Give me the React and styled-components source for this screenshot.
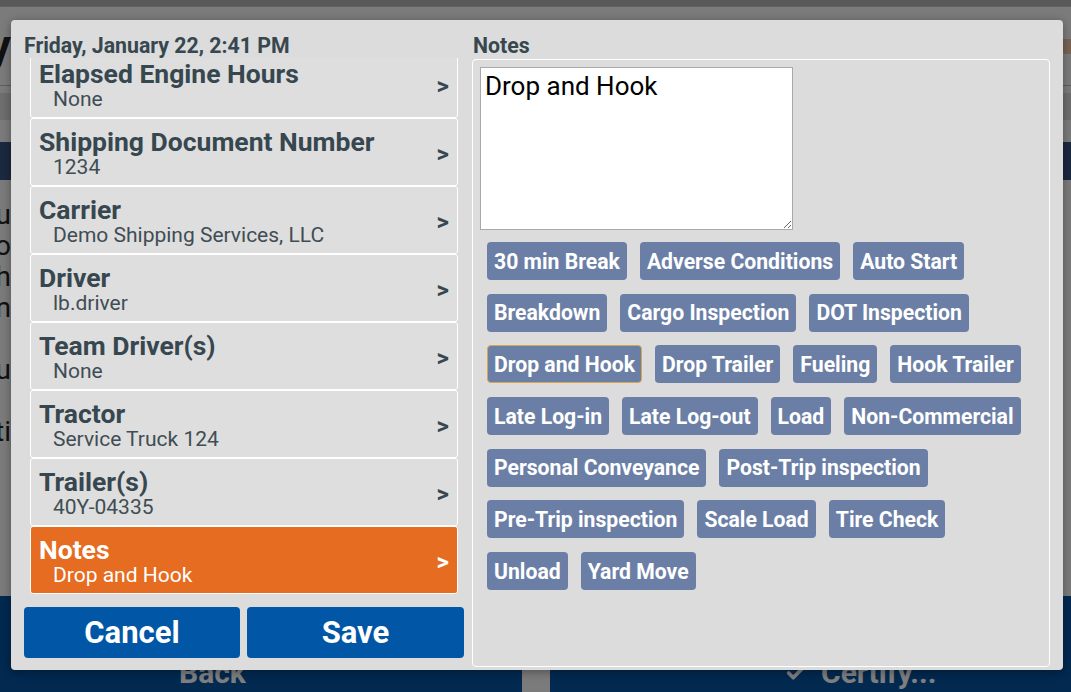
import React, { useLayoutEffect, useRef } from 'react'
import styled, { createGlobalStyle } from 'styled-components'
import { Check } from 'lucide-react'

const GlobalStyle = createGlobalStyle`
  html, body {
    margin: 0;
    padding: 0;
  }
  body {
    font-family: Roboto, "Noto Sans", sans-serif;
    background: #f6f6f6;
    overflow: hidden;
  }
`

const Page = styled.div`
  position: relative;
  width: 1071px;
  height: 692px;
  overflow: hidden;
  display: flex;
  flex-direction: column;
  background: #f6f6f6;
`

const TopStrip = styled.div`
  height: 6px;
  background: #b2b2b2;
  border-bottom: 1px solid #c4c4c4;
`

const BgRow = styled.div`
  display: flex;
  justify-content: space-between;
  align-items: ${p => p.align || 'center'};
  height: ${p => p.h}px;
  background: ${p => p.bg || 'transparent'};
  border-bottom: ${p => (p.line ? '1px solid #bcbcbc' : 'none')};
  margin-top: ${p => p.mt || 0}px;
`

const Edge = styled.div`
  width: ${p => p.w}px;
  overflow: hidden;
  display: flex;
  justify-content: ${p => (p.right ? 'flex-start' : 'flex-end')};
  white-space: nowrap;
  color: #222;
  font-size: ${p => p.size || 28}px;
  font-weight: ${p => p.weight || 400};
  line-height: 1;
`

const OrangeChip = styled.div`
  width: 110px;
  height: 37px;
  margin-top: -22px;
  background: #f0c4a6;
  border-radius: 3px;
  flex-shrink: 0;
`

const Lines = styled.div`
  display: flex;
  flex-direction: column;
  margin-top: 18px;
`

const Footer = styled.div`
  margin-top: auto;
  height: 96px;
  display: flex;
  gap: 28px;
`

const FootButton = styled.div`
  box-sizing: border-box;
  flex: ${p => p.flex};
  background: #0452a0;
  color: #fff;
  font-size: 30px;
  font-weight: 700;
  display: flex;
  align-items: flex-end;
  justify-content: flex-start;
  gap: 14px;
  padding: 0 0 4px ${p => p.pl || 0}px;
  line-height: 1;
  svg {
    margin-bottom: 4px;
  }
`

const Overlay = styled.div`
  position: absolute;
  inset: 0;
  background: rgba(0, 0, 0, 0.5);
`

const Modal = styled.div`
  position: absolute;
  left: 11px;
  top: 20px;
  width: 1052px;
  height: 650px;
  box-sizing: border-box;
  padding: 14px 13px 3px 13px;
  background: #dcdcdc;
  border-radius: 4px;
  box-shadow: 0 2px 10px rgba(0, 0, 0, 0.35);
  display: grid;
  grid-template-columns: 440px 1fr;
  column-gap: 8px;
  color: #37474f;
`

const Column = styled.div`
  display: flex;
  flex-direction: column;
  min-height: 0;
`

const Heading = styled.div`
  font-size: 21.3px;
  font-weight: 700;
  line-height: 24px;
  padding-left: ${p => p.pl || 0}px;
  color: #37474f;
`

const List = styled.div`
  margin: 0 6px;
  height: 536px;
  overflow-y: auto;
  scrollbar-width: none;
  &::-webkit-scrollbar {
    display: none;
  }
`

const Item = styled.div`
  box-sizing: border-box;
  height: 68px;
  display: flex;
  align-items: flex-start;
  justify-content: space-between;
  padding: 10px 8px 7px 8px;
  border: 1px solid #fff;
  border-radius: 3px;
  background: ${p => (p.active ? '#e66c21' : '#dedede')};
  color: ${p => (p.active ? '#fff' : '#37474f')};
`

const ItemText = styled.div`
  display: flex;
  flex-direction: column;
`

const ItemTitle = styled.div`
  font-size: 26.5px;
  font-weight: 700;
  line-height: 26px;
`

const ItemValue = styled.div`
  font-size: 21px;
  line-height: 22px;
  margin-top: 1px;
  padding-left: 14px;
  color: ${p => (p.active ? '#fff' : '#3f4d54')};
`

const Arrow = styled.span`
  align-self: center;
  font-size: 24px;
  font-weight: 700;
`

const Actions = styled.div`
  margin-top: 13px;
  display: grid;
  grid-template-columns: 216px 217px;
  column-gap: 7px;
`

const ActionButton = styled.button`
  height: 51px;
  border: none;
  border-radius: 4px;
  background: #0156a5;
  color: #fff;
  font-family: Roboto, sans-serif;
  font-size: 31px;
  font-weight: 700;
  padding: 0;
`

const Panel = styled.div`
  flex: 1;
  margin-top: 1px;
  padding: 7px;
  border: 1px solid #fff;
  border-radius: 4px;
  display: flex;
  flex-direction: column;
  align-items: flex-start;
`

const NoteBox = styled.textarea`
  width: 313px;
  height: 163px;
  box-sizing: border-box;
  border: 1px solid #a9a9a9;
  background: #fff;
  color: #000;
  font-family: Roboto, sans-serif;
  font-size: 26px;
  line-height: 30px;
  padding: 3px 4px;
  margin: 0;
  outline: none;
`

const Tags = styled.div`
  margin-top: 12px;
  padding: 0 20px 0 7px;
  align-self: stretch;
  display: flex;
  flex-wrap: wrap;
  gap: 13.7px 13px;
`

const Tag = styled.button`
  height: 38px;
  box-sizing: border-box;
  padding: 0 6px;
  border: 1px solid ${p => (p.selected ? '#d8a64c' : 'transparent')};
  border-radius: 4px;
  background: #6b7fa6;
  color: #fff;
  font-family: Roboto, sans-serif;
  font-size: 21.2px;
  font-weight: 700;
  white-space: nowrap;
`

const fields = [
  { title: 'Elapsed Engine Hours', value: 'None' },
  { title: 'Shipping Document Number', value: '1234' },
  { title: 'Carrier', value: 'Demo Shipping Services, LLC' },
  { title: 'Driver', value: 'lb.driver' },
  { title: 'Team Driver(s)', value: 'None' },
  { title: 'Tractor', value: 'Service Truck 124' },
  { title: 'Trailer(s)', value: '40Y-04335' },
  { title: 'Notes', value: 'Drop and Hook', active: true },
]

const notes = [
  '30 min Break', 'Adverse Conditions', 'Auto Start', 'Breakdown', 'Cargo Inspection',
  'DOT Inspection', 'Drop and Hook', 'Drop Trailer', 'Fueling', 'Hook Trailer',
  'Late Log-in', 'Late Log-out', 'Load', 'Non-Commercial', 'Personal Conveyance',
  'Post-Trip inspection', 'Pre-Trip inspection', 'Scale Load', 'Tire Check', 'Unload',
  'Yard Move',
]

const leftLines = ['you', 'do', 'with', 'form', '', 'you', '', 'ti']

export default function App() {
  const listRef = useRef(null)

  useLayoutEffect(() => {
    if (listRef.current) listRef.current.scrollTop = listRef.current.scrollHeight
  }, [])

  return (
    <>
      <GlobalStyle />
      <Page>
        <TopStrip />
        <BgRow h={78} line>
          <Edge w={11} size={44} weight={700}>Daily Summary</Edge>
          <Edge w={8} right><OrangeChip /></Edge>
        </BgRow>
        <BgRow h={27} mt={7} bg="#dcdcdc" />
        <BgRow h={38} mt={22} bg="#36507e" />
        <Lines>
          {leftLines.map((l, i) => (
            <BgRow key={i} h={31} align="flex-end">
              <Edge w={11}>{l}</Edge>
            </BgRow>
          ))}
        </Lines>
        <Footer>
          <FootButton flex="0 0 522px" pl={179}>Back</FootButton>
          <FootButton flex="1" pl={235}>
            <Check size={22} strokeWidth={4} />
            Certify...
          </FootButton>
        </Footer>
        <Overlay />
        <Modal>
          <Column>
            <Heading>Friday, January 22, 2:41 PM</Heading>
            <List ref={listRef}>
              {fields.map(f => (
                <Item key={f.title} active={f.active}>
                  <ItemText>
                    <ItemTitle>{f.title}</ItemTitle>
                    <ItemValue active={f.active}>{f.value}</ItemValue>
                  </ItemText>
                  <Arrow>&gt;</Arrow>
                </Item>
              ))}
            </List>
            <Actions>
              <ActionButton>Cancel</ActionButton>
              <ActionButton>Save</ActionButton>
            </Actions>
          </Column>
          <Column>
            <Heading pl={1}>Notes</Heading>
            <Panel>
              <NoteBox defaultValue="Drop and Hook" spellCheck={false} />
              <Tags>
                {notes.map(n => (
                  <Tag key={n} selected={n === 'Drop and Hook'}>{n}</Tag>
                ))}
              </Tags>
            </Panel>
          </Column>
        </Modal>
      </Page>
    </>
  )
}
